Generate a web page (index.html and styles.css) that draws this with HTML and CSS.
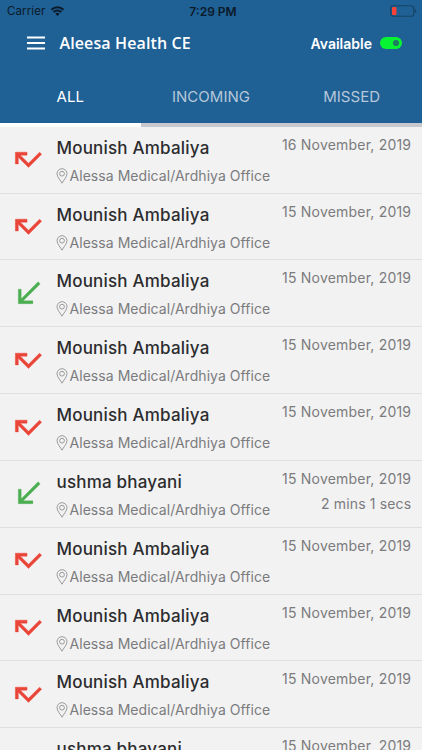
FILE: index.html
```html
<!DOCTYPE html>
<html lang="en">
<head>
<meta charset="utf-8">
<title>Aleesa Health CE</title>
<link rel="stylesheet" href="styles.css">
</head>
<body>
<svg class="defs" aria-hidden="true">
<symbol id="missed" viewBox="0 0 24 24"><path d="M19.59 7L12 14.59 6.41 9H11V7H3v8h2v-4.59l7 7 9-9z"/></symbol>
<symbol id="received" viewBox="0 0 24 24"><path d="M20 5.41L18.59 4 7 15.59V9H5v10h10v-2H8.41z"/></symbol>
<symbol id="pin" viewBox="0 0 12 16"><path d="M6 15.2C4.8 12.6 1 9 1 5.7a5 5 0 0 1 10 0C11 9 7.2 12.6 6 15.2z"/><circle cx="6" cy="5.7" r="2.4"/></symbol>
</svg>
<header class="header">
<div class="status">
<span class="carrier">Carrier</span>
<svg class="wifi" viewBox="0 0 14 10"><path d="M1 3.8a8.6 8.6 0 0 1 12 0M3.1 6a5.6 5.6 0 0 1 7.8 0"/><path class="dot" d="M4.9 7.8a3 3 0 0 1 4.2 0L7 10z"/></svg>
<span class="time">7:29 PM</span>
<svg class="battery" viewBox="0 0 27 12"><rect class="case" x=".75" y=".75" width="23" height="10.5" rx="2.5"/><rect class="charge" x="2" y="2" width="4.5" height="8" rx="1"/><path class="cap" d="M25 4v4c2-.8 2-3.200 0-4z"/></svg>
</div>
<div class="bar">
<svg class="menu" viewBox="0 0 18 14"><path d="M0 1.500h18M0 7h18M0 12.500h18"/></svg>
<h1 class="title">Aleesa Health CE</h1>
<span class="available">Available</span>
<span class="toggle"></span>
</div>
<nav class="tabs">
<span class="tab active">ALL</span><span class="tab">INCOMING</span><span class="tab">MISSED</span>
</nav>
</header>
<main class="list">
<article class="row"><svg class="call missed"><use href="#missed"/></svg><div class="info"><h2 class="name">Mounish Ambaliya</h2><p class="place"><svg class="pin"><use href="#pin"/></svg><span>Alessa Medical/Ardhiya Office</span></p></div><div class="meta"><span>16 November, 2019</span></div></article>
<article class="row"><svg class="call missed"><use href="#missed"/></svg><div class="info"><h2 class="name">Mounish Ambaliya</h2><p class="place"><svg class="pin"><use href="#pin"/></svg><span>Alessa Medical/Ardhiya Office</span></p></div><div class="meta"><span>15 November, 2019</span></div></article>
<article class="row"><svg class="call received"><use href="#received"/></svg><div class="info"><h2 class="name">Mounish Ambaliya</h2><p class="place"><svg class="pin"><use href="#pin"/></svg><span>Alessa Medical/Ardhiya Office</span></p></div><div class="meta"><span>15 November, 2019</span></div></article>
<article class="row"><svg class="call missed"><use href="#missed"/></svg><div class="info"><h2 class="name">Mounish Ambaliya</h2><p class="place"><svg class="pin"><use href="#pin"/></svg><span>Alessa Medical/Ardhiya Office</span></p></div><div class="meta"><span>15 November, 2019</span></div></article>
<article class="row"><svg class="call missed"><use href="#missed"/></svg><div class="info"><h2 class="name">Mounish Ambaliya</h2><p class="place"><svg class="pin"><use href="#pin"/></svg><span>Alessa Medical/Ardhiya Office</span></p></div><div class="meta"><span>15 November, 2019</span></div></article>
<article class="row"><svg class="call received"><use href="#received"/></svg><div class="info"><h2 class="name">ushma bhayani</h2><p class="place"><svg class="pin"><use href="#pin"/></svg><span>Alessa Medical/Ardhiya Office</span></p></div><div class="meta"><span>15 November, 2019</span><span class="duration">2 mins 1 secs</span></div></article>
<article class="row"><svg class="call missed"><use href="#missed"/></svg><div class="info"><h2 class="name">Mounish Ambaliya</h2><p class="place"><svg class="pin"><use href="#pin"/></svg><span>Alessa Medical/Ardhiya Office</span></p></div><div class="meta"><span>15 November, 2019</span></div></article>
<article class="row"><svg class="call missed"><use href="#missed"/></svg><div class="info"><h2 class="name">Mounish Ambaliya</h2><p class="place"><svg class="pin"><use href="#pin"/></svg><span>Alessa Medical/Ardhiya Office</span></p></div><div class="meta"><span>15 November, 2019</span></div></article>
<article class="row"><svg class="call missed"><use href="#missed"/></svg><div class="info"><h2 class="name">Mounish Ambaliya</h2><p class="place"><svg class="pin"><use href="#pin"/></svg><span>Alessa Medical/Ardhiya Office</span></p></div><div class="meta"><span>15 November, 2019</span></div></article>
<article class="row last"><div class="info"><h2 class="name">ushma bhayani</h2></div><div class="meta"><span>15 November, 2019</span></div></article>
</main>
</body>
</html>
```
FILE: styles.css
```css
* { box-sizing: border-box; }
body { margin: 0; height: 750px; overflow: hidden; background: #f2f2f2; font-family: Inter, sans-serif; }
h1, h2, p { margin: 0; }
.defs { display: none; }
svg { flex: none; }

.header { background: #1f6095; height: 126.700px; display: flex; flex-direction: column; }
.status { height: 22px; display: grid; grid-template-columns: auto auto 1fr auto; align-items: center; padding: 0 5px 0 7px; color: #0b1a28; position: relative; }
.carrier { font-size: 11.500px; letter-spacing: 0.1px; }
.wifi { width: 15px; height: 10px; margin-left: 5px; fill: none; stroke: #0b1a28; stroke-width: 2; }
.wifi .dot { fill: #0b1a28; stroke: none; }
.time { position: absolute; left: 0; right: 0; text-align: center; font-size: 12px; font-weight: 600; padding-left: 4px; }
.battery { width: 27px; height: 12px; grid-column: 4; }
.case { fill: none; stroke: #164467; stroke-width: 1.2; }
.charge { fill: #f94336; }
.cap { fill: #164467; }

.bar { height: 42px; display: flex; align-items: center; padding: 0 20.500px 0 27px; color: #fff; }
.menu { width: 18px; height: 14px; stroke: #fff; stroke-width: 2.2; }
.title { flex: 1; margin-left: 14.500px; font: 600 16px "Open Sans", sans-serif; letter-spacing: 0.12px; white-space: nowrap; }
.available { font-size: 14px; font-weight: 600; }
.toggle { width: 22px; height: 12px; border-radius: 6px; background: radial-gradient(circle at 16px 6px, #1f7d62 2.8px, #06f431 3.400px); margin-left: 7.500px; }

.tabs { flex: 1; display: grid; grid-template-columns: repeat(3, 1fr); }
.tab { display: flex; align-items: center; justify-content: center; padding-top: 7px; border-bottom: 4.700px solid #c7c9ce; color: #b6c8d9; font-size: 15px; letter-spacing: 0.05px; }
.tab.active { color: #fff; border-color: #fff; }

.row { height: 66.850px; display: flex; border-bottom: 1px solid #e0e0e4; padding: 0 10.800px 0 10.500px; }
.call { width: 35px; height: 35px; margin-top: 15.500px; }
.missed { fill: #ea4539; stroke: #ea4539; stroke-width: 0.3; }
.received { fill: #4bae50; stroke: #4bae50; stroke-width: 0.2; }
.info { margin-left: 11px; flex: 1; padding-top: 9px; white-space: nowrap; }
.name { font-size: 17px; line-height: 24px; font-weight: 460; letter-spacing: 0.2px; color: #2c2c2e; }
.place { display: flex; align-items: center; margin-top: 6px; font-size: 14px; line-height: 20px; letter-spacing: 0.05px; color: #7b7b7e; }
.pin { width: 12px; height: 16px; margin-left: -0.5px; margin-right: 1.500px; fill: none; stroke: #858588; stroke-width: 0.8; }
.meta { display: flex; flex-direction: column; align-items: flex-end; padding-top: 8px; font-size: 14px; line-height: 20px; letter-spacing: 0.2px; color: #7b7b7e; white-space: nowrap; }
.duration { margin-top: 5px; letter-spacing: 0.14px; }
.last { height: 21.500px; overflow: hidden; border: 0; padding-left: 45.500px; }
```
